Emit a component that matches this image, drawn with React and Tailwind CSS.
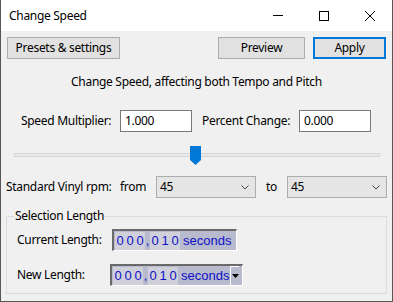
import React from "react";

const font = { fontFamily: '"Noto Sans", "Open Sans", sans-serif' };

function Digit({ d }) {
  return (
    <span className="w-[10px] h-[18px] flex items-center justify-center bg-[#cfd0da]">{d}</span>
  );
}

function TimeCtrl({ dropdown }) {
  return (
    <div
      className={`h-[22px] flex items-center bg-[#b7bbcd] border-t-2 border-l-2 border-[#6a6a6a] border-b border-r border-b-white border-r-white text-[#1010c8] text-[13px] leading-none pl-[1px] tracking-normal ${dropdown ? "w-[133px]" : "w-[125px]"}`}
      style={{ fontFamily: '"Liberation Sans", Arial, sans-serif' }}
    >
      <Digit d="0" />
      <Digit d="0" />
      <Digit d="0" />
      <span className="w-[5px] text-center">,</span>
      <Digit d="0" />
      <Digit d="1" />
      <Digit d="0" />
      <span className="ml-[3px]">seconds</span>
      {dropdown && (
        <span className="ml-[1px] w-[9px] h-[19px] border-l border-t border-white flex items-center justify-center">
          <svg width="7" height="4" viewBox="0 0 7 4"><path d="M0 0H7L3.5 4Z" fill="#000" /></svg>
        </span>
      )}
    </div>
  );
}

function Combo() {
  return (
    <div className="w-[100px] h-[22px] bg-[#e5e5e5] border border-[#adadad] flex items-center justify-between pl-[3px] pr-[6px]">
      <span>45</span>
      <svg width="8" height="5" viewBox="0 0 8 5"><path d="M0.5 0.5L4 4L7.5 0.5" fill="none" stroke="#444" strokeWidth="1" /></svg>
    </div>
  );
}

export default function App() {
  return (
    <div className="w-[393px] h-[302px] bg-[#f0f0f0] border-l border-r border-b border-[#575757] text-[12px] tracking-[-0.3px] text-black flex flex-col whitespace-nowrap" style={font}>
      {/* title bar */}
      <div className="h-[31px] bg-white flex items-center">
        <span className="ml-[8px] flex-1">Change Speed</span>
        <div className="w-[46px] h-[31px] flex items-center justify-center">
          <div className="w-[10px] h-[1px] bg-black" />
        </div>
        <div className="w-[46px] h-[31px] flex items-center justify-center">
          <div className="w-[10px] h-[10px] border border-black" />
        </div>
        <div className="w-[45px] h-[31px] flex items-center justify-center">
          <svg width="10" height="10" viewBox="0 0 10 10"><path d="M0 0L10 10M10 0L0 10" stroke="#000" strokeWidth="1" /></svg>
        </div>
      </div>

      {/* buttons */}
      <div className="mt-[6px] flex items-center px-[6px]">
        <button className="w-[113px] h-[22px] bg-[#e1e1e1] border border-[#adadad]">Presets &amp; settings</button>
        <div className="flex-1" />
        <button className="w-[87px] h-[22px] bg-[#e1e1e1] border border-[#adadad]">Preview</button>
        <button className="ml-[8px] w-[73px] h-[22px] bg-[#e1e1e1] border-2 border-[#0078d7]">Apply</button>
      </div>

      <div className="mt-[15px] h-[16px] leading-[16px] text-center">Change Speed, affecting both Tempo and Pitch</div>

      {/* inputs */}
      <div className="mt-[20px] flex items-center">
        <span className="ml-[20px] w-[99px]">Speed Multiplier:</span>
        <div className="w-[72px] h-[22px] bg-white border border-[#7a7a7a] flex items-center pl-[4px]">1.000</div>
        <span className="ml-[10px] w-[97px]">Percent Change:</span>
        <div className="w-[72px] h-[22px] bg-white border border-[#7a7a7a] flex items-center pl-[4px]">0.000</div>
      </div>

      {/* slider */}
      <div className="mt-[14px] h-[20px] relative ml-[13px] w-[366px]">
        <div className="absolute left-0 right-0 top-[7px] h-[4px] bg-[#e7eaea] border border-[#d6d6d6]" />
        <svg className="absolute left-[176px] top-0" width="11" height="19" viewBox="0 0 11 19">
          <path d="M0 0H11V14L5.5 19L0 14Z" fill="#0078d7" />
        </svg>
      </div>

      {/* vinyl */}
      <div className="mt-[10px] flex items-center">
        <span className="ml-[5px] w-[114px]">Standard Vinyl rpm:</span>
        <span className="w-[36px]">from</span>
        <Combo />
        <span className="ml-[10px] w-[21px]">to</span>
        <Combo />
      </div>

      {/* group */}
      <fieldset className="mt-[10px] ml-[5px] w-[381px] border border-[#dcdcdc] px-0 pb-[7px]">
        <legend className="ml-[7px] px-[1px] h-[16px] leading-[16px]">Selection Length</legend>
        <div className="mt-[5px] pl-[10px] flex items-center">
          <span className="w-[95px]">Current Length:</span>
          <TimeCtrl />
        </div>
        <div className="mt-[13px] pl-[10px] flex items-center">
          <span className="w-[93px]">New Length:</span>
          <TimeCtrl dropdown />
        </div>
      </fieldset>
    </div>
  );
}
